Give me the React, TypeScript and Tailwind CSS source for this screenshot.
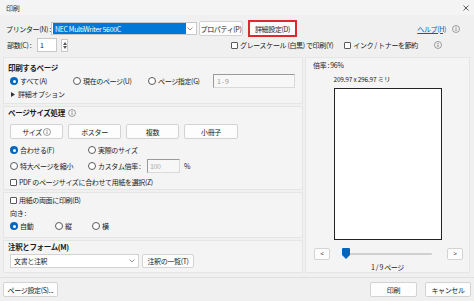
import React from "react";

const Radio = ({ on }: { on?: boolean }) =>
  on ? (
    <span className="inline-flex w-[8px] h-[8px] rounded-full bg-[#0067c0] items-center justify-center shrink-0">
      <span className="w-[3px] h-[3px] rounded-full bg-white" />
    </span>
  ) : (
    <span className="inline-block w-[8px] h-[8px] rounded-full border border-[#5a5a5a] bg-white shrink-0" />
  );

const Check = () => (
  <span className="inline-block w-[7px] h-[7px] rounded-[1px] border border-[#5a5a5a] bg-white shrink-0" />
);

const Info = ({ className = "" }: { className?: string }) => (
  <svg width="8" height="8" viewBox="0 0 16 16" className={"shrink-0 " + className}>
    <circle cx="8" cy="8" r="7" fill="none" stroke="#666" strokeWidth="1.2" />
    <line x1="8" y1="7" x2="8" y2="12" stroke="#666" strokeWidth="1.5" />
    <circle cx="8" cy="4.5" r="1" fill="#666" />
  </svg>
);

const Btn = ({ children, className = "" }: { children: React.ReactNode; className?: string }) => (
  <div
    className={
      "flex items-center justify-center bg-[#fdfdfd] border border-[#d3d3d3] rounded-[2px] shrink-0 " + className
    }
  >
    {children}
  </div>
);

const Chevron = () => (
  <svg width="6" height="4" viewBox="0 0 6 4" className="shrink-0">
    <path d="M0.5 0.5 L3 3 L5.5 0.5" fill="none" stroke="#777" strokeWidth="0.8" />
  </svg>
);

export default function App() {
  return (
    <div className="w-[474px] h-[301px] overflow-hidden whitespace-nowrap tracking-[-0.35px] bg-[#f0f0f0] text-[7px] leading-[10px] text-[#1b1b1b] font-['Noto_Sans_CJK_JP','Noto_Sans',sans-serif]">
      {/* title bar */}
      <div className="h-[15px] flex items-center justify-between pl-[6px] pr-[5px] bg-[#f4f4f4]">
        <span className="text-[#333]">印刷</span>
        <svg width="6" height="6" viewBox="0 0 6 6">
          <path d="M0.5 0.5 L5.5 5.5 M5.5 0.5 L0.5 5.5" stroke="#333" strokeWidth="0.8" />
        </svg>
      </div>

      {/* row 1 */}
      <div className="mt-[5px] h-[17px] flex items-center pl-[6px] pr-[14px]">
        <span className="w-[45px] shrink-0">プリンター(N) :</span>
        <div className="w-[146px] h-[13px] shrink-0 bg-white border border-[#c8c8c8] flex items-center pl-[1px] pr-[3px]">
          <span className="h-[11px] w-[133px] bg-[#0078d7] text-white flex items-center px-[2px]">
            NEC MultiWriter 5600C
          </span>
          <span className="ml-auto">
            <Chevron />
          </span>
        </div>
        <Btn className="ml-[2px] w-[44px] h-[15px]">プロパティ(P)</Btn>
        <div className="ml-[5px] w-[49px] h-[17px] border-2 border-[#e3262c] bg-[#fbfbfb] flex items-center justify-center shrink-0">
          詳細設定(D)
        </div>
        <span className="ml-auto text-[#0063b1] underline">ヘルプ(H)</span>
        <Info className="ml-[6px]" />
      </div>

      {/* row 2 */}
      <div className="mt-[1px] h-[14px] flex items-center pl-[7px]">
        <span className="w-[30px] shrink-0">部数(C) :</span>
        <div className="w-[20px] h-[14px] bg-white border border-[#c8c8c8] flex items-center pl-[2px] shrink-0">1</div>
        <div className="ml-[4px] w-[7px] h-[13px] bg-white border border-[#c8c8c8] flex flex-col items-center justify-center gap-[1px] shrink-0">
          <svg width="4" height="3" viewBox="0 0 4 3">
            <path d="M0 3 L2 0 L4 3 Z" fill="#555" />
          </svg>
          <svg width="4" height="3" viewBox="0 0 4 3">
            <path d="M0 0 L2 3 L4 0 Z" fill="#555" />
          </svg>
        </div>
        <div className="ml-[163px] flex items-center gap-[2px] shrink-0">
          <Check />
          <span>グレースケール (白黒) で印刷(Y)</span>
        </div>
        <div className="ml-[11px] flex items-center gap-[2px] shrink-0">
          <Check />
          <span>インク / トナーを節約</span>
        </div>
        <Info className="ml-[16px]" />
      </div>

      {/* main */}
      <div className="mt-[5px] h-[216px] flex pl-[3px]">
        <div className="w-[300px] flex flex-col gap-[2px] shrink-0">
          {/* section 1 */}
          <div className="h-[47px] bg-[#f4f4f4] border border-[#e5e5e5] pl-[4px] pt-[5px] shrink-0">
            <div className="font-bold text-[7.5px]">印刷するページ</div>
            <div className="mt-[1px] h-[14px] flex items-center pl-[2px]">
              <div className="w-[63px] flex items-center gap-[2px] shrink-0">
                <Radio on />
                <span>すべて(A)</span>
              </div>
              <div className="w-[75px] flex items-center gap-[2px] shrink-0">
                <Radio />
                <span>現在のページ(U)</span>
              </div>
              <div className="w-[65px] flex items-center gap-[2px] shrink-0">
                <Radio />
                <span>ページ指定(G)</span>
              </div>
              <div className="w-[82px] h-[14px] shrink-0 bg-[#f7f7f7] border border-[#dadada] border-t-[#9a9a9a] border-l-[#9a9a9a] flex items-center pl-[3px] text-[#999]">
                1 - 9
              </div>
            </div>
            <div className="mt-[1px] flex items-center pl-[3px] gap-[3px]">
              <svg width="4" height="5" viewBox="0 0 4 5">
                <path d="M0 0 L4 2.5 L0 5 Z" fill="#333" />
              </svg>
              <span>詳細オプション</span>
            </div>
          </div>

          {/* section 2 */}
          <div className="h-[84px] bg-[#f4f4f4] border border-[#e5e5e5] pl-[4px] pt-[1px] shrink-0">
            <div className="flex items-center gap-[3px]">
              <span className="font-bold text-[7.5px]">ページサイズ処理</span>
              <Info />
            </div>
            <div className="mt-[6px] flex gap-[5px] pl-[2px]">
              <Btn className="w-[53px] h-[15px] gap-[1px]">
                サイズ
                <Info />
              </Btn>
              <Btn className="w-[53px] h-[15px]">ポスター</Btn>
              <Btn className="w-[53px] h-[15px]">複数</Btn>
              <Btn className="w-[54px] h-[15px]">小冊子</Btn>
            </div>
            <div className="mt-[6px] flex items-center pl-[2px]">
              <div className="w-[78px] flex items-center gap-[2px] shrink-0">
                <Radio on />
                <span>合わせる(F)</span>
              </div>
              <div className="flex items-center gap-[2px] shrink-0">
                <Radio />
                <span>実際のサイズ</span>
              </div>
            </div>
            <div className="mt-[4px] h-[14px] flex items-center pl-[2px]">
              <div className="w-[78px] flex items-center gap-[2px] shrink-0">
                <Radio />
                <span>特大ページを縮小</span>
              </div>
              <div className="w-[59px] flex items-center gap-[2px] shrink-0">
                <Radio />
                <span>カスタム倍率 :</span>
              </div>
              <div className="w-[33px] h-[14px] shrink-0 bg-[#f7f7f7] border border-[#dadada] border-t-[#9a9a9a] border-l-[#9a9a9a] flex items-center pl-[2px] text-[#aaa]">
                100
              </div>
              <span className="ml-[4px]">%</span>
            </div>
            <div className="mt-[4px] flex items-center gap-[2px] pl-[2px]">
              <Check />
              <span>PDF のページサイズに合わせて用紙を選択(Z)</span>
            </div>
          </div>

          {/* section 3 */}
          <div className="h-[46px] bg-[#f4f4f4] border border-[#e5e5e5] pl-[6px] pt-[2px] shrink-0">
            <div className="flex items-center gap-[2px]">
              <Check />
              <span>用紙の両面に印刷(B)</span>
            </div>
            <div className="mt-[3px]">向き :</div>
            <div className="mt-[3px] flex items-center">
              <div className="w-[45px] flex items-center gap-[2px] shrink-0">
                <Radio on />
                <span>自動</span>
              </div>
              <div className="w-[37px] flex items-center gap-[2px] shrink-0">
                <Radio />
                <span>縦</span>
              </div>
              <div className="flex items-center gap-[2px] shrink-0">
                <Radio />
                <span>横</span>
              </div>
            </div>
          </div>

          {/* section 4 */}
          <div className="flex-1 bg-[#f4f4f4] border border-[#e5e5e5] pl-[4px] pt-[1px]">
            <div className="font-bold text-[7.5px]">注釈とフォーム(M)</div>
            <div className="mt-[2px] flex items-center pl-[2px]">
              <div className="w-[129px] h-[14px] shrink-0 bg-white border border-[#d3d3d3] flex items-center pl-[3px] pr-[3px]">
                <span>文書と注釈</span>
                <span className="ml-auto">
                  <Chevron />
                </span>
              </div>
              <Btn className="ml-[3px] w-[52px] h-[14px]">注釈の一覧(T)</Btn>
            </div>
          </div>
        </div>

        {/* right preview panel */}
        <div className="ml-[2px] w-[165px] shrink-0 bg-[#f4f4f4] border border-[#e5e5e5] flex flex-col">
          <div className="pl-[7px] pt-[2px]">倍率 : 96%</div>
          <div className="mx-auto w-[108px] mt-[4px]">
            <div className="text-[6.5px] tracking-[-0.2px]">209.97 x 296.97 ミリ</div>
            <div className="mt-[4px] w-[108px] h-[152px] bg-white border-[1.5px] border-[#222]" />
          </div>
          <div className="mt-[8px] h-[12px] flex items-center pl-[8px]">
            <Btn className="w-[16px] h-[12px] text-[6px]">&lt;</Btn>
            <div className="ml-[12px] w-[90px] h-[12px] relative shrink-0">
              <div className="absolute left-[3px] right-0 top-[5px] h-[2px] bg-[#d0d0d0] rounded-full" />
              <svg width="8" height="11" viewBox="0 0 8 11" className="absolute left-0 top-0">
                <path d="M1 0 H7 Q8 0 8 1 V7 L4 11 L0 7 V1 Q0 0 1 0 Z" fill="#0067c0" />
              </svg>
            </div>
            <Btn className="ml-[15px] w-[16px] h-[12px] text-[6px]">&gt;</Btn>
          </div>
          <div className="mt-[2px] text-center">1 / 9 ページ</div>
        </div>
      </div>

      {/* separator */}
      <div className="mt-[4px] border-t border-[#e0e0e0]" />

      {/* bottom */}
      <div className="mt-[4px] h-[15px] flex items-center pl-[3px] pr-[3px]">
        <Btn className="w-[55px] h-[15px]">ページ設定(S)...</Btn>
        <Btn className="ml-auto w-[47px] h-[15px] border-[#0067c0]">印刷</Btn>
        <Btn className="ml-[8px] w-[46px] h-[15px]">キャンセル</Btn>
      </div>
    </div>
  );
}
